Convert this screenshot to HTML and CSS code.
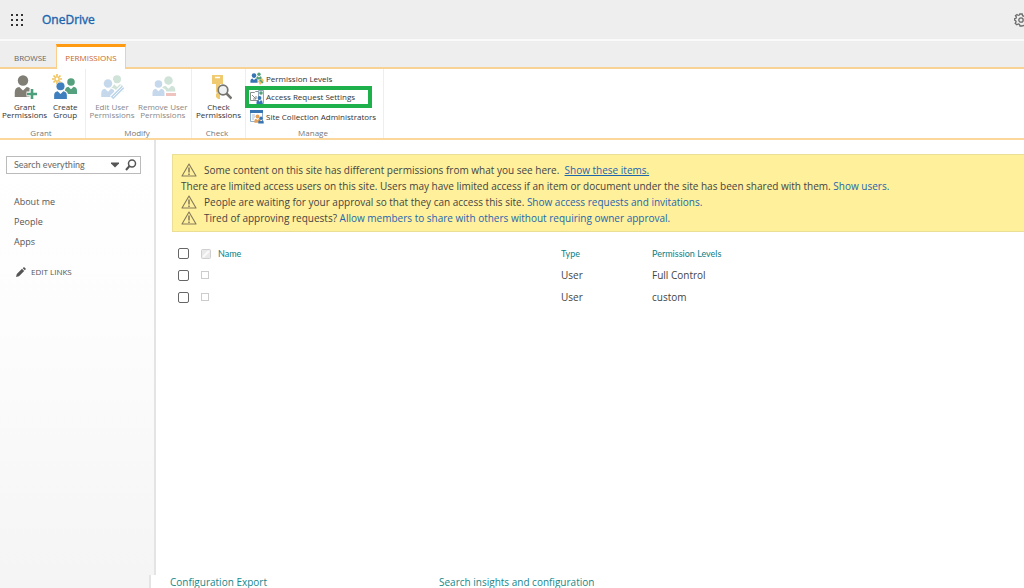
FILE: index.html
```html
<!DOCTYPE html>
<html lang="en">
<head>
<meta charset="utf-8">
<title>OneDrive - Permissions</title>
<link rel="stylesheet" href="styles.css">
</head>
<body>
<svg class="defs" aria-hidden="true">
  <symbol id="person" viewBox="0 0 20 24"><circle cx="10" cy="6" r="5.7"/><path d="M1 24V19Q1 13.500 6 13L10 17L14 13Q19 13.500 19 19V24Z"/></symbol>
  <symbol id="warning" viewBox="0 0 16 14"><path d="M8 1L15 13H1Z" fill="none" stroke="#85795a" stroke-width="1.100" stroke-linejoin="round"/><path d="M8 4.500V9.500M8 10.600V12" stroke="#7a6e50" stroke-width="1.400"/></symbol>
</svg>
<header class="suite">
  <button class="plain waffle" aria-label="App launcher">
    <svg width="14" height="14" viewBox="0 0 14 14" fill="#333"><path d="M1 1h2v2H1zM6 1h2v2H6zM11 1h2v2h-2zM1 6h2v2H1zM6 6h2v2H6zM11 6h2v2h-2zM1 11h2v2H1zM6 11h2v2H6zM11 11h2v2h-2z"/></svg>
  </button>
  <a class="brand" href="#">OneDrive</a>
  <button class="plain gear" aria-label="Settings">
    <svg width="14" height="14" viewBox="0 0 14 14" fill="none" stroke="#6c6c6c" stroke-width="1.300"><path d="M5.800 1h2.400l.4 1.700 1.300.5 1.500-.9 1.500 1.600-.9 1.500.4 1.200 1.200.4v1.600l-1.500.5-.4 1.200.8 1.500-1.600 1.500-1.400-.9-1.200.5L8 13H6l-.5-1.600-1.200-.5-1.500.9-1.600-1.500.9-1.500-.5-1.200L.5 7V5.800l1.500-.5.4-1.200-.9-1.400L3 1.500l1.200.9 1.200-.4z"/><circle cx="7" cy="7" r="2.200"/></svg>
  </button>
</header>
<nav class="tabs">
  <button class="tab">BROWSE</button>
  <button class="tab active">PERMISSIONS</button>
</nav>
<div class="ribbon">
  <section class="group grant">
    <div class="tools">
      <button class="tool">
        <svg width="26" height="26" viewBox="0 0 26 26"><use href="#person" x="1" y="1" width="20" height="22" fill="#817f75"/><path d="M20 14.500v11M14.500 20h11" stroke="#fff" stroke-width="5"/><path d="M20 15v10M15 20h10" stroke="#4b9f7b" stroke-width="2.600"/></svg>
        <span>Grant<br>Permissions</span>
      </button>
      <button class="tool">
        <svg width="26" height="26" viewBox="0 0 26 26"><use href="#person" x="12" y="4" width="14" height="16" fill="#55a17d"/><use href="#person" x="1" y="8" width="16" height="17" fill="#fff" stroke="#fff" stroke-width="2"/><use href="#person" x="1" y="8" width="15" height="17" fill="#3f7fbd"/><path d="M5 0v10M0 5h10M1.500 1.500l7 7M8.500 1.500l-7 7" stroke="#f2c35c" stroke-width="1.700"/><circle cx="5" cy="5" r="1.400" fill="#fff"/></svg>
        <span>Create<br>Group</span>
      </button>
    </div>
    <div class="caption">Grant</div>
  </section>
  <section class="group modify">
    <div class="tools">
      <button class="tool" disabled>
        <svg width="26" height="26" viewBox="0 0 26 26"><use href="#person" x="11" y="1" width="14" height="17" fill="#cfe3d8"/><use href="#person" x="1" y="4" width="17" height="20" fill="#fff" stroke="#fff" stroke-width="2"/><use href="#person" x="1" y="5" width="16" height="18" fill="#c5d8ec"/><path d="M13 24L24 13" stroke="#fff" stroke-width="6"/><path d="M13 24L24 13" stroke="#bfd5eb" stroke-width="3.500"/><path d="M14 23L24 13" stroke="#fff" stroke-width=".8"/></svg>
        <span>Edit User<br>Permissions</span>
      </button>
      <button class="tool" disabled>
        <svg width="26" height="26" viewBox="0 0 26 26"><use href="#person" x="11" y="2" width="15" height="18" fill="#cfe3d8"/><use href="#person" x="1" y="5" width="16" height="18" fill="#fff" stroke="#fff" stroke-width="2"/><use href="#person" x="1" y="6" width="15" height="16" fill="#c5d8ec"/><path d="M15 20.500h11" stroke="#fff" stroke-width="6"/><path d="M16 20.500h10" stroke="#efc4bf" stroke-width="3"/></svg>
        <span>Remove User<br>Permissions</span>
      </button>
    </div>
    <div class="caption">Modify</div>
  </section>
  <section class="group check">
    <div class="tools">
      <button class="tool">
        <svg width="26" height="26" viewBox="0 0 26 26"><path d="M6 1h11v9h-3v15h-2l-2-2v-3l1-1-1-1V10H6z" fill="#f0ca70"/><path d="M9 3.500h5" stroke="#fff" stroke-width="1.500"/><circle cx="17" cy="16" r="5.500" fill="#fff"/><circle cx="17" cy="16" r="4.800" fill="#eef2f3" stroke="#76746e" stroke-width="1.700"/><path d="M20.500 19.500l5 5" stroke="#76746e" stroke-width="2.500"/></svg>
        <span>Check<br>Permissions</span>
      </button>
    </div>
    <div class="caption">Check</div>
  </section>
  <section class="group manage">
    <div class="rows">
      <button class="row-tool">
        <svg width="14" height="14" viewBox="0 0 14 14"><use href="#person" x="6" y="0" width="6" height="8" fill="#55a17d"/><use href="#person" x="0" y="1" width="8" height="10" fill="#3674b4"/><path d="M8 9l4-3 2 3-4 4z" fill="#efc15e"/><path d="M10 8l3 3" stroke="#55a17d" stroke-width="1.500"/></svg>
        <span>Permission Levels</span>
      </button>
      <button class="row-tool marked">
        <svg width="14" height="14" viewBox="0 0 14 14"><path d="M.5 2.500h4l1-1h3v9h-8z" fill="#fff" stroke="#8f8f8f"/><path d="M2 5l4 4M6 6v3H3" fill="none" stroke="#888"/><path d="M8.500.5h5v13h-5z" fill="#f4f7fa" stroke="#91a6bb"/><circle cx="11" cy="3" r="1.800" fill="#55a17d"/><use href="#person" x="6" y="6" width="7" height="8" fill="#3674b4"/></svg>
        <span>Access Request Settings</span>
      </button>
      <button class="row-tool">
        <svg width="14" height="14" viewBox="0 0 14 14"><path d="M.5.500h12v11H.5z" fill="#fff" stroke="#8eaed0"/><path d="M0 1.500h13" stroke="#3674b4" stroke-width="3"/><path d="M2 5h3M2 7h3M2 9h2" stroke="#a9bfd7"/><use href="#person" x="4" y="4" width="7" height="9" fill="#e5a058"/><use href="#person" x="8" y="6" width="6" height="8" fill="#3674b4"/></svg>
        <span>Site Collection Administrators</span>
      </button>
    </div>
    <div class="caption">Manage</div>
  </section>
</div>
<div class="body">
  <aside class="side">
    <form class="search">
      <input type="text" aria-label="Search everything" placeholder="Search everything">
      <button class="plain" type="button" aria-label="Search scope"><svg width="8" height="6" viewBox="0 0 8 6"><path d="M0 .5h8v1L4 5.500 0 1.500z" fill="#555"/></svg></button>
      <button class="plain" type="button" aria-label="Search"><svg width="12" height="12" viewBox="0 0 12 12" fill="none" stroke="#555"><circle cx="7" cy="4.500" r="3.500" stroke-width="1.500"/><path d="M4.500 7L1 11" stroke-width="2"/></svg></button>
    </form>
    <nav class="links">
      <a href="#">About me</a>
      <a href="#">People</a>
      <a href="#">Apps</a>
    </nav>
    <button class="plain edit"><svg width="10" height="10" viewBox="0 0 10 10" fill="#555"><path d="M0 10l.8-3L6 1.800 8.200 4 3 9.200zM6.700 1.200L8 0l2 2-1.200 1.300z"/></svg>EDIT LINKS</button>
  </aside>
  <main class="main">
    <div class="notice">
      <p><svg class="warn"><use href="#warning"/></svg>Some content on this site has different permissions from what you see here. &nbsp;<a class="under" href="#">Show these items.</a></p>
      <p>There are limited access users on this site. Users may have limited access if an item or document under the site has been shared with them. <a href="#">Show users.</a></p>
      <p><svg class="warn"><use href="#warning"/></svg>People are waiting for your approval so that they can access this site. <a href="#">Show access requests and invitations.</a></p>
      <p><svg class="warn"><use href="#warning"/></svg>Tired of approving requests? <a href="#">Allow members to share with others without requiring owner approval.</a></p>
    </div>
    <table class="list">
      <colgroup><col class="c-pick"><col class="c-icon"><col class="c-name"><col class="c-type"><col></colgroup>
      <thead>
        <tr><th><input type="checkbox" aria-label="Select all"></th><th><svg width="10" height="10" viewBox="0 0 10 10"><rect x=".5" y=".5" width="9" height="9" rx="1" fill="#e9e9e9" stroke="#cfcfcf"/><path d="M2 8L8 2" stroke="#fafafa" stroke-width="2"/></svg></th><th><a href="#">Name</a></th><th>Type</th><th>Permission Levels</th></tr>
      </thead>
      <tbody>
        <tr><td><input type="checkbox" aria-label="Select user 1"></td><td><span class="presence"></span></td><td></td><td>User</td><td>Full Control</td></tr>
        <tr><td><input type="checkbox" aria-label="Select user 2"></td><td><span class="presence"></span></td><td></td><td>User</td><td>custom</td></tr>
      </tbody>
    </table>
  </main>
</div>
<footer class="foot">
  <div class="foot-side"></div>
  <a href="#">Configuration Export</a>
  <a href="#">Search insights and configuration</a>
</footer>
</body>
</html>
```
FILE: styles.css
```css
* { box-sizing: border-box; }
body {
  margin: 0;
  height: 100vh;
  display: flex;
  flex-direction: column;
  overflow: hidden;
  background: #fff;
  color: #444;
  font: 10px/16px "Open Sans", "Noto Sans", sans-serif;
}
button, input { font: inherit; color: inherit; }
button { border: 0; background: none; padding: 0; }
a { color: #1d66ae; text-decoration: none; }
.defs { position: absolute; width: 0; height: 0; }
.plain { display: flex; align-items: center; }

.suite {
  flex: none;
  height: 41px;
  display: flex;
  align-items: center;
  overflow: hidden;
  padding-left: 10px;
  background: #eee;
  border-bottom: 2px solid #fafafa;
}
.brand { margin-left: 18px; font-size: 12px; -webkit-text-stroke: 0.4px; }
.gear { margin-left: auto; margin-right: -4px; }

.tabs {
  flex: none;
  height: 28px;
  display: flex;
  align-items: flex-end;
  background: linear-gradient(#f8d294, #f8d294) bottom / 100% 2px no-repeat #eee;
}
.tab { height: 25px; padding: 3px 0 0 14px; width: 56px; font-size: 8px; color: #666; text-align: left; }
.tab.active {
  width: 70px;
  padding: 0;
  background: #fff;
  border: 1px solid #fbcf8a;
  border-top: 3px solid #ff9b12;
  border-bottom: 0;
  color: #c9671f;
  text-align: center;
}

.ribbon { flex: none; height: 71px; display: flex; border-bottom: 2px solid #fcd79b; line-height: 8px; font-size: 8px; }
.group { display: flex; flex-direction: column; border-right: 1px solid #eee; padding-top: 5px; }
.grant { width: 86px; }
.modify { width: 106px; }
.check { width: 54px; }
.manage { width: 138px; padding-top: 0; }
.tools { display: flex; justify-content: space-evenly; flex: 1; }
.tool { display: flex; flex-direction: column; align-items: center; gap: 3px; color: #333; white-space: nowrap; }
.grant .tools { justify-content: flex-start; gap: 5px; padding-left: 2px; }
.tool:disabled { color: #888; }
.caption { height: 9px; padding-right: 3px; text-align: center; color: #777; }
.rows { flex: 1; display: flex; flex-direction: column; }
.row-tool { display: flex; align-items: center; gap: 2px; height: 19px; padding-left: 4px; white-space: nowrap; color: #333; }
.row-tool svg { flex: none; }
.row-tool.marked { width: 127px; height: 22px; margin: -2px 0 -1px -1px; padding-left: 1px; border: 4px solid #1db04b; }

.body { flex: 1; min-height: 0; display: flex; }
.side {
  width: 156px;
  flex: none;
  padding: 16px 13px 0 6px;
  border-right: 2px solid #e4e4e4;
  background: linear-gradient(#fff, #fdfdfd 40%, #f5f5f5);
  color: #555;
}
.search { display: flex; align-items: center; gap: 6px; height: 18px; padding: 0 3px 0 7px; border: 1px solid #bbb; }
.search input { flex: 1; min-width: 0; border: 0; padding: 0; background: none; outline: 0; font: 9px/14px Lato, sans-serif; height: 14px; }
.search ::placeholder { color: #666; opacity: 1; }
.links { display: flex; flex-direction: column; gap: 4px; padding: 20px 8px 0; font-size: 9px; }
.links a { color: #555; }
.edit { gap: 5px; padding: 14px 0 0 10px; font-size: 8px; }

.main { flex: 1; min-width: 0; padding: 14px 0 0 16px; }
.notice { padding: 7px 0 5px 8px; background: #fff09c; border: 1px solid #eadf94; border-right: 0; white-space: nowrap; overflow: hidden; }
.notice p { margin: 0; height: 16px; }
.warn { width: 16px; height: 14px; margin-right: 7px; vertical-align: -3px; }
.under { text-decoration: underline; }

.list { width: 100%; margin-top: 10px; border-collapse: collapse; table-layout: fixed; }
.list th, .list td { height: 22px; padding: 0; text-align: left; font-weight: 400; vertical-align: middle; line-height: 16px; }
.list th { padding-top: 1px; font-size: 9px; font-family: Lato, sans-serif; }
.list th, .list th a { color: #0c8084; }
.list th:first-child, .list td:first-child { padding-left: 6px; }
.list svg, .list input, .presence { display: block; }
.c-pick { width: 29px; }
.c-icon { width: 17px; }
.c-name { width: 343px; }
.c-type { width: 91px; }
.list input { appearance: none; width: 11px; height: 11px; margin: 0; border: 1px solid #666; border-radius: 2px; background: #fff; }
.presence { width: 8px; height: 8px; border: 1px solid #ccc; }

.foot { flex: none; height: 13px; display: flex; }
.foot a { width: 269px; color: #15878a; line-height: 14px; white-space: nowrap; }
.foot-side { width: 151px; margin-right: 19px; background: #f5f5f5; border-right: 2px solid #e4e4e4; }
```
